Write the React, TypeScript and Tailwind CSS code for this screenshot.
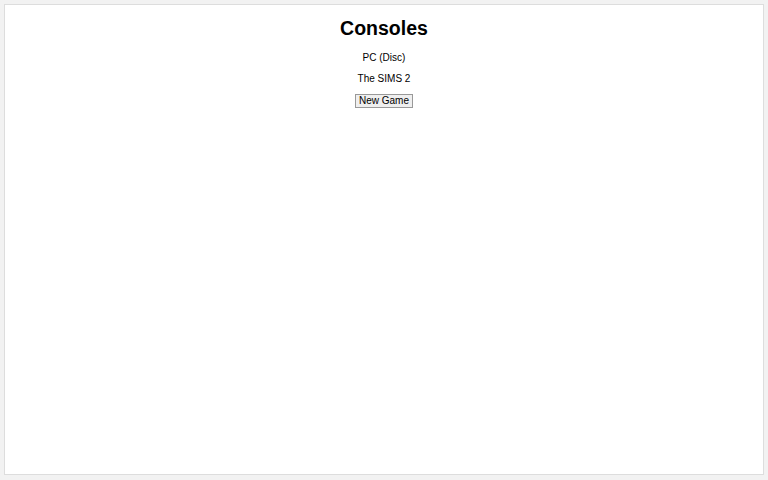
export default function App() {
  return (
    <div className="h-[480px] w-[768px] bg-[#f2f2f2] pt-1 pl-1 font-['Liberation_Sans',Arial,sans-serif] text-black">
      <div className="flex h-[471px] w-[760px] flex-col items-center border border-[#dddddd] bg-white pt-[11px]">
        <h1 className="text-[19.5px] font-bold leading-[24px]">Consoles</h1>
        <p className="mt-[12px] text-[10px] leading-[12px]">PC (Disc)</p>
        <p className="mt-[9px] text-[10px] leading-[12px]">The SIMS 2</p>
        <button className="mt-[9px] border border-[#999999] bg-[#efefef] px-[3px] py-[0px] text-[10px] leading-[12px]">
          New Game
        </button>
      </div>
    </div>
  );
}
